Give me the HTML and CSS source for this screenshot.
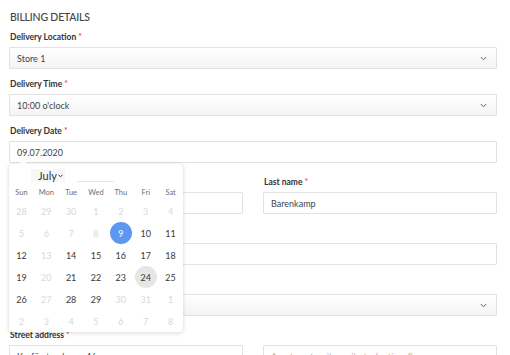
FILE: index.html
```html
<!DOCTYPE html>
<html>
<head>
<meta charset="utf-8">
<link rel="stylesheet" href="styles.css">
</head>
<body>
<div class="page">
  <h3 class="title">BILLING DETAILS</h3>

  <div class="group">
    <label class="lbl">Delivery Location <span class="req">*</span></label>
    <div class="control select"><span>Store 1</span><svg class="chev" width="7" height="5" viewBox="0 0 7 5"><polyline points="0.8,1 3.5,3.8 6.2,1" fill="none" stroke="#666" stroke-width="1"/></svg></div>
  </div>

  <div class="group">
    <label class="lbl">Delivery Time <span class="req">*</span></label>
    <div class="control select"><span>10:00 o'clock</span><svg class="chev" width="7" height="5" viewBox="0 0 7 5"><polyline points="0.8,1 3.5,3.8 6.2,1" fill="none" stroke="#666" stroke-width="1"/></svg></div>
  </div>

  <div class="group">
    <label class="lbl">Delivery Date <span class="req">*</span></label>
    <div class="control"><span>09.07.2020</span></div>
  </div>

  <div class="row first-row">
    <div class="group wide">
      <label class="lbl">First name <span class="req">*</span></label>
      <div class="control"><span>Michael</span></div>
    </div>
    <div class="group wide">
      <label class="lbl">Last name <span class="req">*</span></label>
      <div class="control"><span>Barenkamp</span></div>
    </div>
  </div>

  <div class="group wide">
    <label class="lbl">Company name (optional)</label>
    <div class="control"><span></span></div>
  </div>

  <div class="group wide">
    <label class="lbl">Country <span class="req">*</span></label>
    <div class="control select"><span>Germany</span><svg class="chev" width="7" height="5" viewBox="0 0 7 5"><polyline points="0.8,1 3.5,3.8 6.2,1" fill="none" stroke="#666" stroke-width="1"/></svg></div>
  </div>

  <label class="lbl">Street address <span class="req">*</span></label>
  <div class="row">
    <div class="control"><span>Kurfürstendamm 46</span></div>
    <div class="control"><span class="ph">Apartment, suite, unit etc. (optional)</span></div>
  </div>

  <div class="cal">
    <div class="cal-month">
      <div class="month-box"><span>July</span><svg width="5" height="4" viewBox="0 0 5 4"><polyline points="0.5,0.8 2.5,2.8 4.5,0.8" fill="none" stroke="#333" stroke-width="1"/></svg></div>
      <div class="year-line"></div>
    </div>
    <div class="cal-week">
      <span>Sun</span><span>Mon</span><span>Tue</span><span>Wed</span><span>Thu</span><span>Fri</span><span>Sat</span>
    </div>
    <div class="cal-days">
      <span class="off">28</span><span class="off">29</span><span class="off">30</span><span class="off">1</span><span class="off">2</span><span class="off">3</span><span class="off">4</span>
      <span class="off">5</span><span class="off">6</span><span class="off">7</span><span class="off">8</span><span class="sel">9</span><span>10</span><span>11</span>
      <span>12</span><span class="off">13</span><span>14</span><span>15</span><span>16</span><span>17</span><span>18</span>
      <span>19</span><span class="off">20</span><span>21</span><span>22</span><span>23</span><span class="today">24</span><span>25</span>
      <span>26</span><span class="off">27</span><span>28</span><span>29</span><span class="off">30</span><span class="off">31</span><span class="off">1</span>
      <span class="off">2</span><span class="off">3</span><span class="off">4</span><span class="off">5</span><span class="off">6</span><span class="off">7</span><span class="off">8</span>
    </div>
  </div>
</div>
</body>
</html>
```
FILE: styles.css
```css
html, body {
  margin: 0;
  padding: 0;
  background: #fff;
  overflow: hidden;
}
body {
  font-family: Lato, "Liberation Sans", sans-serif;
  color: #333;
}
.page {
  position: relative;
  padding: 10px 13px 0 9px;
  height: 355px;
  box-sizing: border-box;
  overflow: hidden;
}
.title {
  margin: 0 0 7px 1px;
  font-size: 10.5px;
  line-height: 14px;
  font-weight: 500;
  color: #444;
  letter-spacing: -0.2px;
}
.group {
  margin-bottom: 9px;
}
.group.wide {
  margin-bottom: 13px;
}
.lbl {
  display: block;
  font-size: 8.5px;
  line-height: 12px;
  font-weight: 700;
  color: #333;
  margin: 0 0 4px 1px;
}
.req {
  color: #d33;
  font-weight: 400;
}
.control {
  box-sizing: border-box;
  height: 22px;
  border: 1px solid #e2e2e2;
  background: #fff;
  display: flex;
  align-items: center;
  justify-content: space-between;
  padding: 0 8px 0 7px;
  font-size: 9px;
  color: #444;
  border-radius: 1px;
}
.select {
  background: linear-gradient(#fff, #f4f4f4);
}
.chev {
  display: block;
  margin-right: 1px;
}
.ph {
  color: #aaa;
}
.row {
  display: flex;
  gap: 20px;
}
.row > * {
  flex: 1;
}
.first-row {
  margin-top: 13px;
}

/* calendar */
.cal {
  position: absolute;
  left: 9px;
  top: 164px;
  width: 174px;
  height: 168px;
  background: #fff;
  border-radius: 4px;
  box-shadow: 0 1px 5px rgba(0,0,0,0.14), 0 0 1px rgba(0,0,0,0.12);
}
.cal::before {
  content: "";
  position: absolute;
  top: -4px;
  left: 10px;
  border-left: 4px solid transparent;
  border-right: 4px solid transparent;
  border-bottom: 4px solid #fff;
}
.cal-month {
  height: 20px;
  display: flex;
  align-items: flex-end;
  padding-left: 22px;
}
.month-box {
  height: 13px;
  width: 34px;
  background: #f7f7f7;
  display: flex;
  align-items: center;
  justify-content: flex-end;
  gap: 1px;
  padding-right: 2px;
  box-sizing: border-box;
  font-size: 11px;
  color: #333;
  margin-bottom: 2px;
}
.month-box svg {
  display: block;
  margin-top: 1px;
}
.year-line {
  width: 37px;
  height: 1px;
  background: #e6e6e6;
  margin-left: 12px;
  margin-bottom: 2px;
}
.cal-week {
  height: 16px;
  display: grid;
  grid-template-columns: repeat(7, 1fr);
  align-items: center;
  font-size: 7.5px;
  color: #707070;
  text-align: center;
}
.cal-days {
  display: grid;
  grid-template-columns: repeat(7, 1fr);
  grid-auto-rows: 22px;
}
.cal-days span {
  display: flex;
  align-items: center;
  justify-content: center;
  font-size: 9px;
  color: #393939;
  width: 22px;
  height: 22px;
  justify-self: center;
  border-radius: 50%;
}
.cal-days span.off {
  color: #d8d8d8;
}
.cal-days span.sel {
  background: #5c98f0;
  color: #fff;
}
.cal-days span.today {
  background: #e6e6e6;
}
```
